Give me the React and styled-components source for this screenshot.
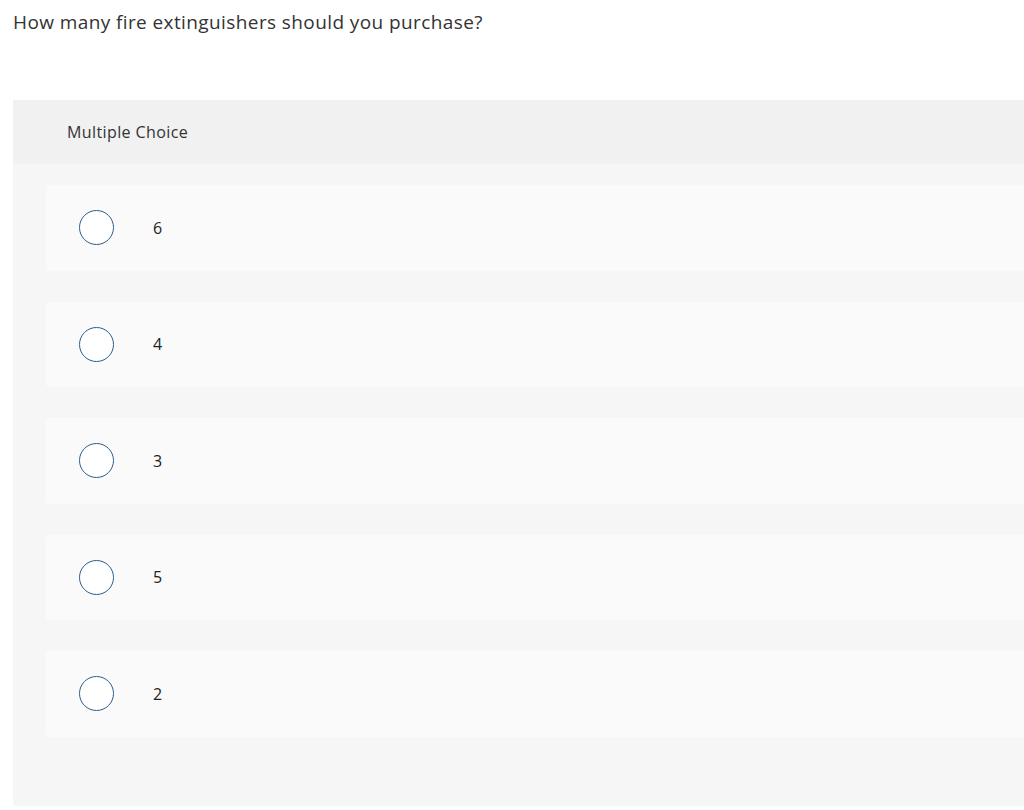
import styled, { createGlobalStyle } from "styled-components";

const GlobalStyle = createGlobalStyle`
  html, body {
    margin: 0;
    padding: 0;
    background: #ffffff;
    overflow: hidden;
  }
  body {
    font-family: "Open Sans", "Liberation Sans", sans-serif;
    color: #333333;
  }
`;

const Page = styled.div`
  width: 1060px;
  padding: 9px 0 0 13px;
`;

const Question = styled.h1`
  margin: 0;
  font-size: 19px;
  font-weight: 400;
  line-height: 26px;
  letter-spacing: 0.4px;
  color: #333333;
`;

const Panel = styled.section`
  margin-top: 65px;
  background: #f6f6f6;
  border-radius: 2px;
  padding-bottom: 69px;
`;

const PanelHeader = styled.div`
  height: 64px;
  display: flex;
  align-items: center;
  padding-left: 54px;
  background: #f1f1f1;
  font-size: 16px;
  letter-spacing: 0.4px;
  color: #333333;
`;

const Options = styled.div`
  display: flex;
  flex-direction: column;
  gap: 31px;
  padding: 21px 0 0 33px;
`;

const Option = styled.label`
  height: 85.5px;
  display: flex;
  align-items: center;
  padding-left: 33px;
  background: #fafafa;
  border-radius: 3px;
  cursor: pointer;
`;

const Radio = styled.span`
  box-sizing: border-box;
  width: 35px;
  height: 35px;
  border: 1.6px solid #2d5e8e;
  border-radius: 50%;
  background: #ffffff;
  flex-shrink: 0;
`;

const Answer = styled.span`
  margin-left: 39px;
  font-size: 16px;
  color: #222222;
`;

const answers = ["6", "4", "3", "5", "2"];

export default function App() {
  return (
    <>
      <GlobalStyle />
      <Page>
        <Question>How many fire extinguishers should you purchase?</Question>
        <Panel>
          <PanelHeader>Multiple Choice</PanelHeader>
          <Options>
            {answers.map((a) => (
              <Option key={a}>
                <Radio />
                <Answer>{a}</Answer>
              </Option>
            ))}
          </Options>
        </Panel>
      </Page>
    </>
  );
}
